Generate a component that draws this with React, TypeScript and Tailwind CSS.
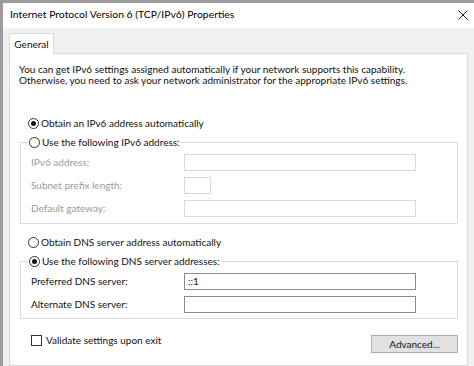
import React from "react";

const font = { fontFamily: 'Lato, "Segoe UI", sans-serif' };

function Radio({ checked, label }: { checked?: boolean; label: string }) {
  return (
    <span className="flex items-center gap-[2px]">
      <span className="w-[11px] h-[11px] rounded-full border border-[#333333] bg-white flex items-center justify-center">
        {checked && <span className="w-[5px] h-[5px] rounded-full bg-[#111111]" />}
      </span>
      <span>{label}</span>
    </span>
  );
}

function Field({ label, value, disabled, small }: { label: string; value?: string; disabled?: boolean; small?: boolean }) {
  return (
    <div className="flex items-center h-[17px]">
      <span className={`w-[153px] ${disabled ? "text-[#9a9a9a]" : "text-[#111111]"}`}>{label}</span>
      <div
        className={`h-[17px] bg-white border flex items-center px-[3px] ${small ? "w-[27px]" : "w-[232px]"} ${
          disabled ? "border-[#d9d9d9]" : "border-[#8a8a8a]"
        }`}
      >
        {value}
      </div>
    </div>
  );
}

export default function App() {
  return (
    <div className="w-[474px] h-[366px] overflow-hidden bg-[#9c9c9c] pt-[3px] pl-[3px] text-[10px] text-[#111111]" style={font}>
      <div className="w-[471px] h-[363px] flex flex-col bg-[#f0f0f0]">
        {/* title bar */}
        <div className="h-[25px] bg-white flex items-center justify-between pl-[7px] pr-[6px] pb-[1px] text-[10.4px] text-black">
          <span>Internet Protocol Version 6 (TCP/IPv6) Properties</span>
          <svg width="10" height="10" viewBox="0 0 10 10">
            <path d="M0.5 0.5 L9.5 9.5 M9.5 0.5 L0.5 9.5" stroke="#222" strokeWidth="1" />
          </svg>
        </div>

        {/* tabs */}
        <div className="flex pl-[6px] pt-[5px]">
          <div className="w-[45px] h-[21px] bg-white border border-b-0 border-[#d9d9d9] flex items-center justify-center -mb-[1px] relative">
            General
          </div>
        </div>

        {/* tab panel */}
        <div className="ml-[6px] w-[459px] flex-1 bg-white border border-[#d9d9d9] flex flex-col">
          <p className="pl-[9px] pt-[10px] leading-[11px]">
            You can get IPv6 settings assigned automatically if your network supports this capability.
            <br />
            Otherwise, you need to ask your network administrator for the appropriate IPv6 settings.
          </p>

          <div className="ml-[18px] mt-[30px] h-[14px] flex items-center">
            <Radio checked label="Obtain an IPv6 address automatically" />
          </div>

          <fieldset className="ml-[10px] mt-[5px] w-[438px] border border-[#dcdcdc] pl-[10px] pb-[6px]">
            <legend className="ml-[-3px] px-[1px] h-[14px] flex items-center">
              <Radio label="Use the following IPv6 address:" />
            </legend>
            <div className="flex flex-col gap-[6px] pt-[5px]">
              <Field disabled label="IPv6 address:" />
              <Field disabled small label="Subnet prefix length:" />
              <Field disabled label="Default gateway:" />
            </div>
          </fieldset>

          <div className="ml-[18px] mt-[11px] h-[14px] flex items-center">
            <Radio label="Obtain DNS server address automatically" />
          </div>

          <fieldset className="ml-[10px] mt-[5px] w-[438px] border border-[#dcdcdc] pl-[10px] pb-[5px]">
            <legend className="ml-[-3px] px-[1px] h-[14px] flex items-center">
              <Radio checked label="Use the following DNS server addresses:" />
            </legend>
            <div className="flex flex-col gap-[6px] pt-[5px]">
              <Field label="Preferred DNS server:" value="::1" />
              <Field label="Alternate DNS server:" />
            </div>
          </fieldset>

          <div className="flex items-start justify-between mt-[16px] ml-[21px] w-[427px]">
            <span className="flex items-center gap-[4px] -mt-[2px]">
              <span className="w-[11px] h-[11px] border border-[#333333] bg-white" />
              <span>Validate settings upon exit</span>
            </span>
            <button className="w-[87px] h-[18px] bg-[#e1e1e1] border border-[#adadad] text-[10px] text-[#111111]">
              Advanced...
            </button>
          </div>
        </div>
      </div>
    </div>
  );
}
